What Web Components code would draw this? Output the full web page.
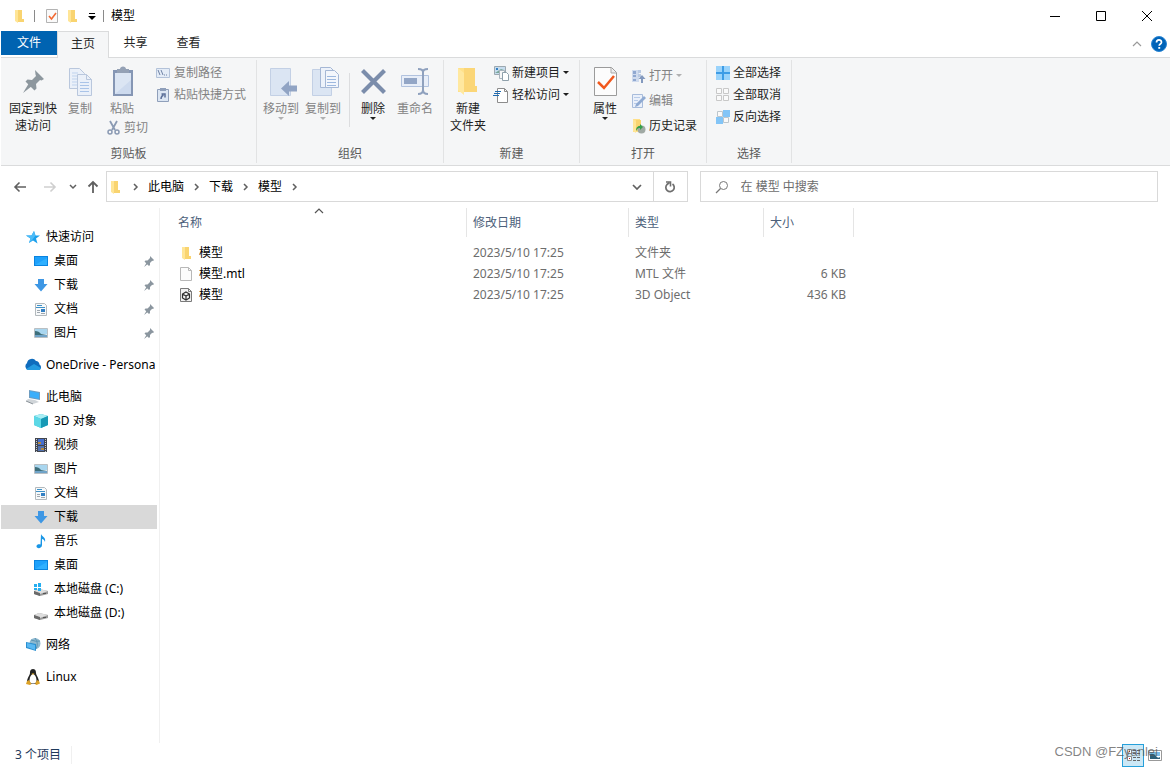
<!DOCTYPE html>
<html lang="zh-CN">
<head>
<meta charset="UTF-8">
<meta name="viewport" content="width=device-width, initial-scale=1.0">
<title>模型</title>
<style>
    html, body {
        margin: 0;
        height: 100%;
    }
    body {
        font-family: "Noto Sans", "Noto Sans CJK SC", sans-serif;
        font-size: 12px;
        line-height: 18px;
        color: #000;
        background: #fff;
        overflow: hidden;
    }
</style>
</head>
<body>
<explorer-window></explorer-window>

<script>
    // [width, height, markup] of every icon; the viewBox is 0 0 width height
    const docShape = (fill, stroke) => `<path d="M2.5 1.5h8l3 3v10h-11z" fill="${fill}" stroke="${stroke}"/><path d="M10.5 1.5v3h3" fill="none" stroke="${stroke}"/>`;
    const monitor = `<path d="M1 3h14v10H1z" fill="#0a84e0"/><path d="M2 4h12v8H2z" fill="#1ea1fb"/><path d="M2 12 14 5v7z" fill="#2fb0ff"/>`;
    const disk = `<path d="m1 10 5-2 9 2v3l-8 2-6-2z" fill="#9a9a9a"/><path d="m1 10 5-2 9 2-8 3z" fill="#dedede"/><path d="m1 10 6 2v3l-6-2z" fill="#6a6a6a"/><path d="M10 12.5h3" stroke="#555"/>`;
    const ICONS = {
        folder: [16, 16, `<path d="M4 2h7v11H4z" fill="#ffe69a"/><path d="M7 2h4v9h2v3H7z" fill="#f9d470"/><path d="m4 2 3 2v11l-3-2z" fill="#ffe596"/>`],
        check: [16, 16, `<path d="M2.5 1.5h11v13h-11z" fill="#fafafa" stroke="#b3b3b3"/><path d="m5 8 2.5 3L12 5" fill="none" stroke="#f26a33" stroke-width="1.6"/>`],
        more: [8, 10, `<path d="M1 2.5h6" stroke="#000"/><path d="M0 5h8L4 9z" fill="#000"/>`],
        min: [12, 12, `<path d="M1 6.5h10" stroke="#000"/>`],
        max: [12, 12, `<path d="M1.5 1.5h9v9h-9z" fill="none" stroke="#000"/>`],
        close: [12, 12, `<path d="m1 1 10 10M11 1 1 11" stroke="#000"/>`],
        help: [16, 16, `<circle cx="8" cy="8" r="7.5" fill="#0063b8" stroke="#2b86d4"/><path d="M5.5 6.5c0-3.500 5-3.300 5-.3 0 1.800-2.300 1.700-2.300 3.500" fill="none" stroke="#fff" stroke-width="1.7"/><path d="M7.3 11h1.9v1.8H7.3z" fill="#fff"/>`],
        up: [10, 6, `<path d="m1 5 4-4 4 4" fill="none" stroke="currentColor" stroke-width="1.2"/>`],
        down: [10, 6, `<path d="m1 1 4 4 4-4" fill="none" stroke="currentColor" stroke-width="1.7"/>`],
        recent: [8, 6, `<path d="m1 1 3 3 3-3" fill="none" stroke="currentColor" stroke-width="1.5"/>`],
        right: [7, 8, `<path d="m2 1 3 3-3 3" fill="none" stroke="currentColor" stroke-width="1.5"/>`],
        drop: [6, 4, `<path d="M0 0h6L3 3z" fill="currentColor"/>`],
        back: [14, 12, `<path d="M13 6H2M6.5 1.5 2 6l4.5 4.5" fill="none" stroke="currentColor" stroke-width="1.6"/>`],
        forward: [14, 12, `<path d="M1 6h11M7.5 1.5 12 6l-4.5 4.5" fill="none" stroke="currentColor" stroke-width="1.6"/>`],
        parent: [12, 14, `<path d="M6 13V2M1.5 6.5 6 2l4.5 4.5" fill="none" stroke="currentColor" stroke-width="1.8"/>`],
        refresh: [12, 14, `<path d="M8.500 4a4.200 4.200 0 1 1-5.500.5L5.500 2.500" fill="none" stroke="#6f6f6f" stroke-width="1.7"/><path d="M2 2h4.500v4.500" fill="none" stroke="#6f6f6f" stroke-width="1.6"/>`],
        search: [14, 14, `<circle cx="8.5" cy="5.5" r="4" fill="none" stroke="#777"/><path d="M5.5 8.5 1 13" stroke="#777" stroke-width="1.2"/>`],

        // ribbon, large
        pinBig: [32, 32, `<g fill="#8d979e"><path d="m18 5 9 9-2.500 1.500-1.500-.5-4 4 .5 4.500-2 2-9-9 2-2 4.500.5 4-4-.5-1.500z"/><path d="m12 18 3 3-9 7z"/></g>`],
        copyBig: [32, 32, `<g stroke="#b9c7dd"><path d="M5.5 3.5h10l5 5v15h-15z" fill="#eaf0f9"/><path d="M8 8h6M8 11h9M8 14h9M8 17h6M8 20h6" stroke="#bfd3ee"/><path d="M13.5 9.5h9l5 5v16h-14z" fill="#eaf0f9"/><path d="M22.5 9.5v5h5" fill="none"/><path d="M16 17.5h9M16 20.5h9M16 23.5h9M16 26.5h9" stroke="#aac4e8"/></g>`],
        pasteBig: [32, 32, `<path d="M7 5h20v26H7z" fill="#8596b4"/><path d="M9 8h16v21H9z" fill="#dbe5f3"/><path d="m9 29 16-14v14z" fill="#cddaee"/><path d="M11 4h3c0-3.500 6-3.500 6 0h3v4H11z" fill="#94a1b5"/>`],
        moveBig: [32, 32, `<path d="M5.5 3.5h20v27h-20z" fill="#dbe5f3" stroke="#c3d0e5"/><path d="M16 23.5 24 16v4.500h8v6h-8V31z" fill="#91a4c4"/>`],
        copyToBig: [32, 32, `<path d="M5.5 4.5h19v26h-19z" fill="#dbe5f3" stroke="#c3d0e5"/><g stroke="#a5b7d5"><path d="M13.5 2.500h10l3 3v17h-13z" fill="#edf2fa"/><path d="M18.5 5.5h9l4 4v13h-13z" fill="#f3f6fc"/><path d="M20 11.5h9M20 14.5h9M20 17.5h9M20 20.5h9" stroke="#9db8df"/></g>`],
        deleteBig: [32, 32, `<path d="m5.5 5.5 22 22M27.5 5.5l-22 22" stroke="#7b8dab" stroke-width="4.2"/>`],
        renameBig: [32, 32, `<path d="M2.5 10.500h27v11h-27z" fill="#e8eef8" stroke="#b1c2de"/><path d="M5 13h13v6H5z" fill="#93a6c6"/><path d="M19 4q5 0 5 3v18q0 4-5 4M29 4q-5 0-5 3v18q0 4 5 4" fill="none" stroke="#8fa1be" stroke-width="2"/>`],
        newFolderBig: [32, 32, `<path d="M6 3h16v24H6z" fill="#ffe18a"/><path d="M12 3h11v18h2v6H12z" fill="#fbd677"/><path d="m6 3 6 5v22l-6-5z" fill="#ffe89f"/>`],
        propsBig: [32, 32, `<path d="M5.5 2.500h17l5 5v23h-22z" fill="#fcfcfc" stroke="#9b9b9b"/><path d="M22 3v5h5" fill="#ececec" stroke="#ababab"/><path d="m9 17 6 6 10-12" fill="none" stroke="#f1581d" stroke-width="2.5"/>`],

        // ribbon, small
        path: [16, 16, `<path d="M1.5 3.5h13v9h-13z" fill="#e4ecf7" stroke="#b3c2d9"/><path d="m3 5 2 5M6 5l2 5M9 10h1M11 10h1" stroke="#6f82a5"/>`],
        shortcut: [16, 16, `<path d="M2.5 2.500h11v12h-11z" fill="#dce6f3" stroke="#8f9fba"/><path d="M5 1h6v3H5z" fill="#8f9fba"/><path d="M6 12c0-2 .5-3 2.500-4M6.5 7H10v3.500" fill="none" stroke="#5c7099" stroke-width="1.5"/>`],
        cut: [16, 16, `<path d="m5 1 5 9M12 1l-5 9" stroke="#8a9ab3" stroke-width="1.8"/><circle cx="5" cy="12" r="2" fill="none" stroke="#8a9ab3" stroke-width="1.5"/><circle cx="12" cy="12" r="2" fill="none" stroke="#8a9ab3" stroke-width="1.5"/>`],
        newItem: [16, 16, `<path d="M1.5 1.500h11v8h-11z" fill="#c6dcee" stroke="#9ca8b0"/><path d="M2 8h9V5L8 4z" fill="#7aa79b"/><path d="M3 3h2v2H3z" fill="#3380c4"/><path d="M6.5 5.5h5v8h-5z" fill="#f7f7f7" stroke="#a9b4bd"/><path d="M9.5 7.500h4l2 2v6h-6z" fill="#fff" stroke="#8fa0ab"/>`],
        easy: [16, 16, `<path d="M4.5 1.5h7l3 3v11h-10z" fill="#fff" stroke="#8c8c8c"/><path d="M11.5 1.5v3h3" fill="none" stroke="#8c8c8c"/><path d="M2 4.5h6M1 6.5h6M0 8.5h6" stroke="#1f6bb0"/>`],
        open: [16, 16, `<path d="M2 2h7v12H2z" fill="#cfdbee"/><path d="M3 3h3v3H3zM3 7h3v2H3zM3 11h3v2H3z" fill="#90a8d0"/><path d="M8 2h3v3H8zM8 6h3v3H8z" fill="#b9c9e2"/><path d="M11 15v-4H8.500L12 7l3.500 4H13v4z" fill="#8399be"/>`],
        edit: [16, 16, `<path d="M2.5 1.5h10v13h-10z" fill="#eaf0fa" stroke="#a8bcdb"/><path d="M4 4.5h6M4 7.5h4M4 10.5h3" stroke="#b8cbe8"/><path d="m14 3 2 2-8 8-3 1 1-3z" fill="#8faad2"/>`],
        history: [16, 16, `<path d="M3 1h7v13H3z" fill="#ffe08a"/><path d="M6 2h5v11H6z" fill="#f9d470"/><path d="m3 1 3 3v11l-3-2z" fill="#ffe596"/><circle cx="11.5" cy="11.5" r="4" fill="#a0a9a4"/><path d="M6 13c0-5 3-5 4-5V6l3 3-3 3v-2c-2-.5-3 1-4 3z" fill="#36a04a"/>`],
        selectAll: [16, 16, `<path d="M2 1h14v14H2z" fill="#9ad3fb"/><path d="M9 1v14M2 8h14" stroke="#3d9ce6" stroke-width="2"/>`],
        selectNone: [16, 16, `<g fill="#fafafa" stroke="#c8c8c8"><path d="M2.5 1.5h5v5h-5zM9.5 1.5h5v5h-5zM2.5 8.5h5v5h-5zM9.5 8.5h5v5h-5z"/></g>`],
        invert: [16, 16, `<path d="M9 1h7v7H9zM2 8h7v7H2z" fill="#83c5f7"/><g fill="#fafafa" stroke="#bdc6cc"><path d="M3.500 2.500h5v5h-5zM9.500 8.500h5v5h-5z"/></g>`],

        // navigation pane
        star: [16, 16, `<path d="m9 2 1.500 4.500h4.500l-4 3 1.500 5-4.500-3L4 14l1.500-4.500L1 6.500h5.500z" fill="#1ba0ec"/><path d="m9 2 1.500 4.500-3 4L4 14l1.500-4.500L1 6.500h5.500z" fill="#4dbbf7"/>`],
        desktop: [16, 16, monitor],
        download: [16, 16, `<path d="M5 2h6v5h3.500L8 14.500 1.500 7H5z" fill="#3e97e4"/>`],
        document: [16, 16, `<path d="M2.5 2.500h9l2 2v10h-11z" fill="#f7f9fa" stroke="#b3b9bd"/><path d="M4 4.500h5M3 6.500h9" stroke="#3c91c9"/><path d="M4 9.500h3M4 11.500h3M8 12.500h4" stroke="#a0a8b0"/><path d="M8 8h4v3H8z" fill="#3380c4"/>`],
        picture: [16, 16, `<path d="M1.5 3.5h13v9h-13z" fill="#e9f3f9" stroke="#b9bfc3"/><path d="M2 4h12v5H2z" fill="#a9d6ef"/><path d="M2 6q4 0 6 3l6 1v1H2z" fill="#3d6f7b"/><path d="M2 10h12v2H2z" fill="#6fa3c8"/>`],
        pin: [12, 12, `<path d="m7 1 4 4-1 1-.8-.2L7 8v2L6 11 1.500 6.500l1-1h2L7 3z" fill="#8b969f"/><path d="m4 7 1.500 1.500L1 12z" fill="#8b969f"/>`],
        cloud: [18, 16, `<path d="M4 13a4 4 0 0 1-1-7 5 5 0 0 1 9-2q3 0 3.500 3.500A3 3 0 0 1 15 13z" fill="#0f6cbd"/><path d="m2 12 8-5 7 4-1.500 2H4z" fill="#249ae0"/>`],
        pc: [16, 16, `<path d="m4 1 11 2v8L4 9z" fill="#6d9cc0"/><path d="m5 2 9 2v6L5 8z" fill="#3aaefa"/><path d="m3 10 7 1 4 2-6 2-7-3z" fill="#cfd4d8"/><path d="m1 12 7 3" stroke="#8c949a"/>`],
        cube: [16, 16, `<path d="m8 1 7 2v9l-7 3-7-3V3z" fill="#31b9d0"/><path d="m8 1 7 2-7 3-7-3z" fill="#a9eef4"/><path d="M8 6v9l-7-3V3z" fill="#5cd8e6"/><path d="M8 6v9l7-3V3z" fill="#1799b5"/>`],
        video: [16, 16, `<path d="M2 1h12v14H2z" fill="#42464f"/><path d="M5 2h6v6H5z" fill="#456fcf"/><path d="M5 9h6v5H5z" fill="#5272b0"/><path d="M5 5h3v2H5zM8 11h3v2H8z" fill="#b5883e"/><path d="M3.5 2v13M12.5 2v13" stroke="#c9ccd2" stroke-dasharray="1 1"/>`],
        music: [16, 16, `<path d="M8 1c1 3 5 3 4 8-.5-2-2-3-3-3v6c0 4-6 4-5.500 1 .4-2 2.500-2 4-1.500z" fill="#1996e6"/>`],
        diskC: [16, 16, disk + `<path d="M1 3h3v3H1zM5 2h3v4H5zM1 7h3v2H1zM5 7h3v3H5z" fill="#25aef0"/>`],
        diskD: [16, 16, disk],
        network: [16, 16, `<circle cx="10" cy="6.5" r="5.5" fill="#8fb9cf"/><path d="M6 3q5 2 9 1M10 1q4 5 1 11" fill="none" stroke="#5c94b4"/><path d="m1 5 10 2v7L1 11z" fill="#2a8fd0"/><path d="m2 6 8 2v5l-8-3z" fill="#5ab8f2"/>`],
        linux: [16, 16, `<path d="M8 0c3 0 3 3 3 4 0 2 3 5 3 9l-2 2H4l-2-2c0-4 3-7 3-9 0-1 0-4 3-4z" fill="#222"/><path d="M8 5c2 0 3.500 4 3.500 6.500S10 14.500 8 14.500 4.500 14 4.500 11.500 6 5 8 5z" fill="#fff"/><path d="M6.5 4.500h3L8 6z" fill="#f0b429"/><path d="m2 12 2-1 2.500 4L5 16l-4-1zM14 12l-2-1-2 4 1.500 1 3.500-1.500z" fill="#dca126"/>`],

        // file list
        file: [16, 16, docShape("#fcfcfc", "#b8b8b8")],
        object: [16, 16, docShape("#f2f2f2", "#7a7a7a") + `<path d="m8 5 3.500 2v4L8 13l-3.500-2V7zM8 9v4M8 9l3.500-2M8 9 4.500 7" fill="none" stroke="#2d2d2d" stroke-width="1.2"/>`],
        details: [16, 16, `<path d="M2.5 2.500h4v4h-4zM2.500 9.500h4v4h-4z" fill="#fff" stroke="#888"/><path d="M4 4h1v1H4zM4 11h1v1H4z" fill="#d02020"/><path d="M8 3.500h3M12 3.500h3M8 6.500h3M12 6.500h3M8 10.500h3M12 10.500h3M8 13.500h3M12 13.500h3" stroke="#666"/>`],
        thumbs: [16, 16, `<path d="M1.5 3.500h13v10h-13z" fill="#fff" stroke="#999"/><path d="M3 5h10v4H3z" fill="#7cc0ea"/><path d="M3 7q4-1 6 2t4 1v2H3z" fill="#2c5f78"/>`]
    };

    // shared by every button that has no chrome of its own
    const PLAIN = `
        button {
            font: inherit;
            color: inherit;
            background: none;
            border: 0;
            margin: 0;
            padding: 0;
        }
    `;

    class UiIcon extends HTMLElement {
        connectedCallback() {
            if (this.shadowRoot) return;
            const [w, h, body] = ICONS[this.getAttribute("name")];
            this.attachShadow({ mode: "open" }).innerHTML = `
                <style>
                    :host { display: inline-block; flex: none; width: ${w}px; height: ${h}px; }
                    svg { display: block; }
                </style>
                <svg width="${w}" height="${h}" viewBox="0 0 ${w} ${h}" aria-hidden="true">${body}</svg>
            `;
        }
    }

    class TitleBar extends HTMLElement {
        constructor() {
            super();
            this.attachShadow({ mode: "open" }).innerHTML = `
                <style>${PLAIN}
                    :host { display: flex; align-items: stretch; justify-content: space-between; height: 31px; }
                    .left { display: flex; align-items: center; padding-left: 10px; }
                    .left button { display: flex; padding: 0 2px; }
                    .left .custom { padding: 0 0 0 6px; }
                    .bar { width: 1px; height: 12px; background: #8a8a8a; margin: 0 7px; }
                    .title { margin: 0; font: inherit; }
                    .controls { display: flex; }
                    .controls button { width: 46px; display: flex; align-items: center; justify-content: center; }
                </style>
                <div class="left">
                    <ui-icon name="folder"></ui-icon>
                    <span class="bar"></span>
                    <button aria-label="属性"><ui-icon name="check"></ui-icon></button>
                    <button aria-label="新建文件夹"><ui-icon name="folder"></ui-icon></button>
                    <button class="custom" aria-label="自定义快速访问工具栏"><ui-icon name="more"></ui-icon></button>
                    <span class="bar"></span>
                    <h1 class="title"><slot></slot></h1>
                </div>
                <div class="controls">
                    <button aria-label="最小化"><ui-icon name="min"></ui-icon></button>
                    <button aria-label="最大化"><ui-icon name="max"></ui-icon></button>
                    <button aria-label="关闭"><ui-icon name="close"></ui-icon></button>
                </div>
            `;
        }
    }

    class RibbonTabs extends HTMLElement {
        constructor() {
            super();
            this.attachShadow({ mode: "open" }).innerHTML = `
                <style>${PLAIN}
                    :host { display: flex; justify-content: space-between; height: 26px; border-bottom: 1px solid #dadbdc; }
                    .tabs { display: flex; align-items: flex-start; }
                    .tabs button { height: 24px; width: 53px; color: #262626; }
                    .tabs .file { width: 56px; background: #0063b1; color: #fff; }
                    .tabs .active {
                        width: 52px;
                        height: 27px;
                        padding-bottom: 3px;
                        background: #f5f6f7;
                        border: 1px solid #dadbdc;
                        border-bottom: 0;
                    }
                    .right { display: flex; align-items: center; gap: 9px; padding-right: 3px; color: #9a9a9a; }
                    .right button { display: flex; }
                </style>
                <div class="tabs" role="tablist">
                    <button class="file" role="tab">文件</button>
                    <button class="active" role="tab" aria-selected="true">主页</button>
                    <button role="tab">共享</button>
                    <button role="tab">查看</button>
                </div>
                <div class="right">
                    <button aria-label="最小化功能区"><ui-icon name="up"></ui-icon></button>
                    <button aria-label="帮助"><ui-icon name="help"></ui-icon></button>
                </div>
            `;
        }
    }

    class RibbonGroup extends HTMLElement {
        constructor() {
            super();
            this.attachShadow({ mode: "open" }).innerHTML = `
                <style>
                    :host { display: flex; flex-direction: column; margin: 2px 0; border-right: 1px solid #e2e3e4; }
                    .body { display: flex; align-items: flex-start; padding: 2px var(--end, 10px) 0 var(--start, 3px); min-height: 83px; }
                    .label { text-align: center; color: #5a5a5a; }
                </style>
                <div class="body"><slot></slot></div>
                <div class="label"><slot name="label"></slot></div>
            `;
        }
    }

    // attributes: icon, size="large", menu, off
    class RibbonButton extends HTMLElement {
        connectedCallback() {
            if (this.shadowRoot) return;
            const arrow = this.hasAttribute("menu") ? `<ui-icon name="drop"></ui-icon>` : "";
            this.attachShadow({ mode: "open" }).innerHTML = `
                <style>${PLAIN}
                    :host { display: block; color: #1e1e1e; }
                    :host([off]) { color: #838383; }
                    button { display: flex; align-items: center; gap: 3px; height: var(--row, 22px); white-space: nowrap; }
                    :host([size="large"]) button {
                        flex-direction: column;
                        gap: 0;
                        min-width: 42px;
                        height: auto;
                        padding-top: 3px;
                        line-height: 17px;
                    }
                    :host([size="large"]) .text { margin-top: 3px; }
                    :host([off]) ui-icon[name="drop"] { opacity: 0.6; }
                </style>
                <button ${this.hasAttribute("off") ? "disabled" : ""}>
                    <ui-icon name="${this.getAttribute("icon")}"></ui-icon>
                    <span class="text"><slot></slot></span>
                    ${arrow}
                </button>
            `;
        }
    }

    class RibbonBar extends HTMLElement {
        constructor() {
            super();
            this.attachShadow({ mode: "open" }).innerHTML = `
                <style>
                    :host { display: flex; background: #f5f6f7; border-bottom: 1px solid #dadbdc; }
                    .stack { display: flex; flex-direction: column; align-items: flex-start; }
                    .wide { padding-left: 4px; }
                    .clipboard { --start: 8px; }
                    .clipboard .wide { padding-left: 7px; }
                    .clipboard .pin { margin-right: 2px; }
                    .clipboard .cut { margin-left: 4px; }
                    .organize { --end: 7px; }
                    .open { --start: 4px; --end: 9px; }
                    .tall { --row: 25px; padding: 1px 0 0 4px; }
                    .line { width: 1px; height: 54px; margin: 11px 2px 0 5px; background: #dcdddf; }
                </style>
                <ribbon-group class="clipboard">
                    <ribbon-button class="pin" size="large" icon="pinBig">固定到快<br>速访问</ribbon-button>
                    <ribbon-button size="large" icon="copyBig" off>复制</ribbon-button>
                    <div class="stack">
                        <ribbon-button size="large" icon="pasteBig" off>粘贴</ribbon-button>
                        <ribbon-button class="cut" icon="cut" off>剪切</ribbon-button>
                    </div>
                    <div class="stack wide">
                        <ribbon-button icon="path" off>复制路径</ribbon-button>
                        <ribbon-button icon="shortcut" off>粘贴快捷方式</ribbon-button>
                    </div>
                    <span slot="label">剪贴板</span>
                </ribbon-group>
                <ribbon-group class="organize">
                    <ribbon-button size="large" icon="moveBig" menu off>移动到</ribbon-button>
                    <ribbon-button size="large" icon="copyToBig" menu off>复制到</ribbon-button>
                    <div class="line"></div>
                    <ribbon-button size="large" icon="deleteBig" menu>删除</ribbon-button>
                    <ribbon-button size="large" icon="renameBig" off>重命名</ribbon-button>
                    <span slot="label">组织</span>
                </ribbon-group>
                <ribbon-group>
                    <ribbon-button size="large" icon="newFolderBig">新建<br>文件夹</ribbon-button>
                    <div class="stack wide">
                        <ribbon-button icon="newItem" menu>新建项目</ribbon-button>
                        <ribbon-button icon="easy" menu>轻松访问</ribbon-button>
                    </div>
                    <span slot="label">新建</span>
                </ribbon-group>
                <ribbon-group class="open">
                    <ribbon-button size="large" icon="propsBig" menu>属性</ribbon-button>
                    <div class="stack tall">
                        <ribbon-button icon="open" menu off>打开</ribbon-button>
                        <ribbon-button icon="edit" off>编辑</ribbon-button>
                        <ribbon-button icon="history">历史记录</ribbon-button>
                    </div>
                    <span slot="label">打开</span>
                </ribbon-group>
                <ribbon-group>
                    <div class="stack wide">
                        <ribbon-button icon="selectAll">全部选择</ribbon-button>
                        <ribbon-button icon="selectNone">全部取消</ribbon-button>
                        <ribbon-button icon="invert">反向选择</ribbon-button>
                    </div>
                    <span slot="label">选择</span>
                </ribbon-group>
            `;
        }
    }

    class AddressBar extends HTMLElement {
        constructor() {
            super();
            this.attachShadow({ mode: "open" }).innerHTML = `
                <style>${PLAIN}
                    :host { display: flex; align-items: stretch; height: 31px; padding: 5px 12px 6px; color: #606060; }
                    button { display: flex; align-items: center; }
                    .nav { display: flex; align-items: center; gap: 12px; padding-right: 7px; }
                    .nav button:nth-child(2) { color: #cfcfcf; margin-left: 4px; }
                    .nav button:nth-child(3) { margin-right: -2px; }
                    .box { display: flex; box-sizing: border-box; border: 1px solid #d9d9d9; min-width: 0; }
                    .place { flex: 579; }
                    .crumbs { display: flex; align-items: center; flex: 1; gap: 9px; }
                    .crumbs a { color: #000; text-decoration: none; }
                    .open { padding: 0 11px; }
                    .reload { width: 34px; justify-content: center; border-left: 1px solid #d9d9d9; }
                    .search { flex: 442; margin-left: 12px; align-items: center; gap: 12px; padding-left: 14px; }
                    input { flex: 1; min-width: 0; border: 0; outline: 0; padding: 0; font: inherit; background: none; }
                    input::placeholder { color: #6d6d6d; opacity: 1; }
                </style>
                <div class="nav">
                    <button aria-label="后退"><ui-icon name="back"></ui-icon></button>
                    <button aria-label="前进" disabled><ui-icon name="forward"></ui-icon></button>
                    <button aria-label="最近浏览的位置"><ui-icon name="recent"></ui-icon></button>
                    <button aria-label="上移"><ui-icon name="parent"></ui-icon></button>
                </div>
                <div class="box place">
                    <nav class="crumbs">
                        <ui-icon name="folder"></ui-icon>
                        <ui-icon name="right"></ui-icon>
                        <a href="#pc">此电脑</a>
                        <ui-icon name="right"></ui-icon>
                        <a href="#downloads">下载</a>
                        <ui-icon name="right"></ui-icon>
                        <a href="#model">模型</a>
                        <ui-icon name="right"></ui-icon>
                    </nav>
                    <button class="open" aria-label="以前的位置"><ui-icon name="down"></ui-icon></button>
                    <button class="reload" aria-label="刷新"><ui-icon name="refresh"></ui-icon></button>
                </div>
                <div class="box search">
                    <ui-icon name="search"></ui-icon>
                    <input type="text" aria-label="搜索" placeholder="在 模型 中搜索">
                </div>
            `;
        }
    }

    // attributes: icon, root, pinned, selected
    class NavItem extends HTMLElement {
        connectedCallback() {
            if (this.shadowRoot) return;
            this.attachShadow({ mode: "open" }).innerHTML = `
                <style>
                    :host { display: block; }
                    a {
                        display: flex;
                        align-items: center;
                        gap: 5px;
                        height: 24px;
                        padding: 0 2px 0 32px;
                        color: #000;
                        text-decoration: none;
                        white-space: nowrap;
                        overflow: hidden;
                    }
                    :host([root]) a { padding: 0 0 0 23px; gap: 4px; }
                    :host([selected]) a { background: #d9d9d9; }
                    .icon { display: flex; flex: none; justify-content: center; width: 16px; }
                    :host([root]) .icon { width: 18px; }
                    .text { flex: 1; }
                </style>
                <a href="#">
                    <span class="icon"><ui-icon name="${this.getAttribute("icon")}"></ui-icon></span>
                    <span class="text"><slot></slot></span>
                    ${this.hasAttribute("pinned") ? `<ui-icon name="pin"></ui-icon>` : ""}
                </a>
            `;
        }
    }

    class NavPane extends HTMLElement {
        constructor() {
            super();
            this.attachShadow({ mode: "open" }).innerHTML = `
                <style>
                    :host { display: block; flex: none; width: 156px; padding: 17px 2px 0 0; border-right: 1px solid #f0f0f0; }
                    nav { display: flex; flex-direction: column; gap: 8px; }
                </style>
                <nav>
                    <div>
                        <nav-item icon="star" root>快速访问</nav-item>
                        <nav-item icon="desktop" pinned>桌面</nav-item>
                        <nav-item icon="download" pinned>下载</nav-item>
                        <nav-item icon="document" pinned>文档</nav-item>
                        <nav-item icon="picture" pinned>图片</nav-item>
                    </div>
                    <nav-item icon="cloud" root>OneDrive - Persona</nav-item>
                    <div>
                        <nav-item icon="pc" root>此电脑</nav-item>
                        <nav-item icon="cube">3D 对象</nav-item>
                        <nav-item icon="video">视频</nav-item>
                        <nav-item icon="picture">图片</nav-item>
                        <nav-item icon="document">文档</nav-item>
                        <nav-item icon="download" selected>下载</nav-item>
                        <nav-item icon="music">音乐</nav-item>
                        <nav-item icon="desktop">桌面</nav-item>
                        <nav-item icon="diskC">本地磁盘 (C:)</nav-item>
                        <nav-item icon="diskD">本地磁盘 (D:)</nav-item>
                    </div>
                    <nav-item icon="network" root>网络</nav-item>
                    <nav-item icon="linux" root>Linux</nav-item>
                </nav>
            `;
        }
    }

    class FileList extends HTMLElement {
        constructor() {
            super();
            const files = [
                ["folder", "模型", "2023/5/10 17:25", "文件夹", ""],
                ["file", "模型.mtl", "2023/5/10 17:25", "MTL 文件", "6 KB"],
                ["object", "模型", "2023/5/10 17:25", "3D Object", "436 KB"]
            ];
            const rows = files.map(([icon, name, date, type, size]) => `
                <tr>
                    <td><span class="name"><ui-icon name="${icon}"></ui-icon>${name}</span></td>
                    <td>${date}</td>
                    <td>${type}</td>
                    <td class="size">${size}</td>
                </tr>`).join("");
            this.attachShadow({ mode: "open" }).innerHTML = `
                <style>
                    :host { display: block; flex: 1; padding-left: 12px; }
                    table { border-collapse: separate; border-spacing: 0; table-layout: fixed; width: 682px; }
                    th {
                        position: relative;
                        height: 29px;
                        padding: 0 0 0 6px;
                        border-right: 1px solid #e5e5e5;
                        font-weight: normal;
                        text-align: left;
                        color: #4c607a;
                    }
                    .sort { position: absolute; top: 0; left: 0; right: 0; display: flex; justify-content: center; color: #555; }
                    tbody::before { content: ""; display: block; height: 5px; }
                    td { height: 21px; padding: 0 0 0 6px; color: #6d6d6d; }
                    .name { display: flex; align-items: center; gap: 5px; color: #000; }
                    .size { text-align: right; padding-right: 8px; }
                </style>
                <table>
                    <colgroup><col width="295"><col width="162"><col width="135"><col width="90"></colgroup>
                    <thead>
                        <tr>
                            <th scope="col" aria-sort="ascending">名称<span class="sort"><ui-icon name="up"></ui-icon></span></th>
                            <th scope="col">修改日期</th>
                            <th scope="col">类型</th>
                            <th scope="col">大小</th>
                        </tr>
                    </thead>
                    <tbody>${rows}</tbody>
                </table>
            `;
        }
    }

    class StatusBar extends HTMLElement {
        constructor() {
            super();
            this.attachShadow({ mode: "open" }).innerHTML = `
                <style>${PLAIN}
                    :host { display: flex; align-items: center; justify-content: space-between; height: 24px; padding: 0 4px 1px 14px; color: #1e395b; }
                    .count { padding-right: 10px; border-right: 1px solid #f0f0f0; }
                    .views { display: flex; position: relative; }
                    button { display: flex; align-items: center; justify-content: center; box-sizing: border-box; width: 22px; height: 23px; }
                    .on { background: #cce8f6; border: 1px solid #26a0da; }
                    .mark {
                        position: absolute;
                        right: 8px;
                        bottom: 6px;
                        font-family: "Liberation Sans", sans-serif;
                        font-size: 13px;
                        color: rgba(90, 90, 90, 0.75);
                        white-space: nowrap;
                    }
                </style>
                <span class="count">3 个项目</span>
                <div class="views">
                    <button class="on" aria-label="详细信息"><ui-icon name="details"></ui-icon></button>
                    <button aria-label="大图标"><ui-icon name="thumbs"></ui-icon></button>
                    <span class="mark">CSDN @FZyanlei</span>
                </div>
            `;
        }
    }

    class ExplorerWindow extends HTMLElement {
        constructor() {
            super();
            this.attachShadow({ mode: "open" }).innerHTML = `
                <style>
                    :host { display: flex; flex-direction: column; box-sizing: border-box; min-height: 100vh; padding: 0 1px; }
                    main { display: flex; flex: 1; }
                </style>
                <title-bar>模型</title-bar>
                <ribbon-tabs></ribbon-tabs>
                <ribbon-bar></ribbon-bar>
                <address-bar></address-bar>
                <main>
                    <nav-pane></nav-pane>
                    <file-list></file-list>
                </main>
                <status-bar></status-bar>
            `;
        }
    }

    customElements.define("ui-icon", UiIcon);
    customElements.define("title-bar", TitleBar);
    customElements.define("ribbon-tabs", RibbonTabs);
    customElements.define("ribbon-group", RibbonGroup);
    customElements.define("ribbon-button", RibbonButton);
    customElements.define("ribbon-bar", RibbonBar);
    customElements.define("address-bar", AddressBar);
    customElements.define("nav-item", NavItem);
    customElements.define("nav-pane", NavPane);
    customElements.define("file-list", FileList);
    customElements.define("status-bar", StatusBar);
    customElements.define("explorer-window", ExplorerWindow);
</script>
</body>
</html>
